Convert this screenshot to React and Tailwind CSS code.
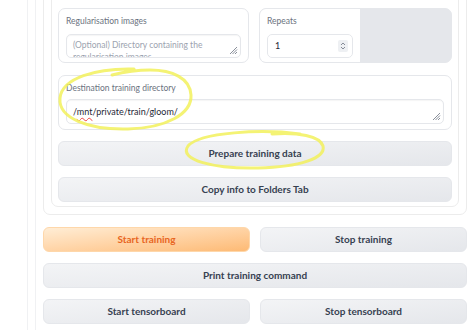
import React from "react";

const font = { fontFamily: "Lato, 'Open Sans', sans-serif" };

function Resize() {
  return (
    <svg className="absolute right-[2px] bottom-[2px]" width="9" height="9" viewBox="0 0 9 9">
      <path d="M8 1 L1 8 M8 3.5 L3.5 8 M8 6 L6 8" stroke="#6b7280" strokeWidth="0.8" fill="none" />
    </svg>
  );
}

function GrayBtn({ children, className = "" }) {
  return (
    <div
      className={
        "h-[25px] flex items-center justify-center rounded-[6px] border border-[#e5e7eb] bg-gradient-to-br from-[#f3f4f6] to-[#e5e7eb] text-[10px] font-bold text-[#374151] " +
        className
      }
    >
      {children}
    </div>
  );
}

export default function App() {
  return (
    <div className="relative w-[474px] h-[330px] overflow-hidden bg-white" style={font}>
      <div className="ml-[27px] h-full border-l border-[#f0f1f3] pl-[7px]">
        <div className="h-full w-[440px] border-l border-[#f0f1f3] pl-[7px]">
          <div className="w-[424px] flex flex-col">
            {/* outer panel */}
            <div className="mt-[-20px] rounded-[7px] border border-[#ececec] p-[7px]">
              <div className="rounded-[7px] border border-[#ececec] px-[6px] pt-[19px] pb-[4px] flex flex-col">
                {/* row 1 */}
                <div className="flex gap-[10px] h-[55px]">
                  <div className="w-[191px] rounded-[7px] border border-[#e5e7eb] bg-white px-[7px] pt-[6px]">
                    <div className="text-[8.5px] text-[#6b7280] leading-[12px]">Regularisation images</div>
                    <div className="relative mt-[7px] h-[24px] rounded-[5px] border border-[#e5e7eb] bg-white px-[6px] pt-[4px] overflow-hidden shadow-[inset_0_1px_1px_rgba(0,0,0,0.04)]">
                      <div className="text-[8.5px] leading-[12px] text-[#9ca3af]">
                        (Optional) Directory containing the
                        <br />
                        regularisation images
                      </div>
                      <Resize />
                    </div>
                  </div>
                  <div className="flex-1 flex rounded-[7px] border border-[#e5e7eb] bg-[#e5e7eb] overflow-hidden">
                    <div className="w-[100px] bg-white px-[7px] pt-[6px]">
                      <div className="text-[8.5px] text-[#6b7280] leading-[12px]">Repeats</div>
                      <div className="mt-[7px] h-[24px] rounded-[5px] border border-[#e5e7eb] bg-white flex items-center justify-between pl-[7px] pr-[4px]">
                        <span className="text-[9px] text-[#1f2937]">1</span>
                        <svg width="10" height="12" viewBox="0 0 10 12">
                          <rect x="0" y="0" width="10" height="12" rx="2" fill="#eef0f3" />
                          <path d="M3 5 L5 3 L7 5 M3 7 L5 9 L7 7" stroke="#6b7280" strokeWidth="0.8" fill="none" />
                        </svg>
                      </div>
                    </div>
                  </div>
                </div>
                {/* destination */}
                <div className="mt-[12px] h-[55px] rounded-[7px] border border-[#e5e7eb] bg-white px-[7px] pt-[6px]">
                  <div className="text-[8.5px] text-[#6b7280] leading-[12px]">Destination training directory</div>
                  <div className="relative mt-[5px] h-[25px] rounded-[5px] border border-[#e5e7eb] bg-white px-[6px] flex items-center shadow-[inset_0_1px_1px_rgba(0,0,0,0.04)]">
                    <span className="text-[9px] text-[#1f2937]">
                      /<span className="underline decoration-wavy decoration-[#ef4444] decoration-[0.5px] underline-offset-[2px]">mnt</span>/private/train/gloom/
                    </span>
                    <Resize />
                  </div>
                </div>
                <GrayBtn className="mt-[11px]">Prepare training data</GrayBtn>
                <GrayBtn className="mt-[11px]">Copy info to Folders Tab</GrayBtn>
              </div>
            </div>
            {/* bottom buttons */}
            <div className="mt-[12px] flex flex-col gap-[11px]">
              <div className="flex gap-[10px]">
                <div className="flex-1 h-[25px] flex items-center justify-center rounded-[6px] border border-[#fed7aa] bg-gradient-to-br from-[#ffedd5] to-[#fdba74] text-[10px] font-bold text-[#e8661f]">
                  Start training
                </div>
                <GrayBtn className="flex-1">Stop training</GrayBtn>
              </div>
              <GrayBtn>Print training command</GrayBtn>
              <div className="flex gap-[10px]">
                <GrayBtn className="flex-1">Start tensorboard</GrayBtn>
                <GrayBtn className="flex-1">Stop tensorboard</GrayBtn>
              </div>
            </div>
          </div>
        </div>
      </div>
      {/* yellow annotations */}
      <svg className="absolute inset-0 pointer-events-none" width="474" height="330" viewBox="0 0 474 330">
        <g stroke="#f3f15c" strokeWidth="3" fill="none" strokeLinecap="round" opacity="0.85">
          <path d="M134 69 C 96 68, 62 78, 60 98 C 58 118, 88 130, 128 129 C 166 128, 192 114, 191 95 C 190 78, 172 70, 150 70 C 140 70, 124 72, 112 75" />
          <path d="M300 134 C 262 129, 200 132, 188 146 C 178 160, 214 169, 258 168 C 300 167, 326 158, 323 146 C 320 136, 298 132, 272 134" />
        </g>
      </svg>
    </div>
  );
}
